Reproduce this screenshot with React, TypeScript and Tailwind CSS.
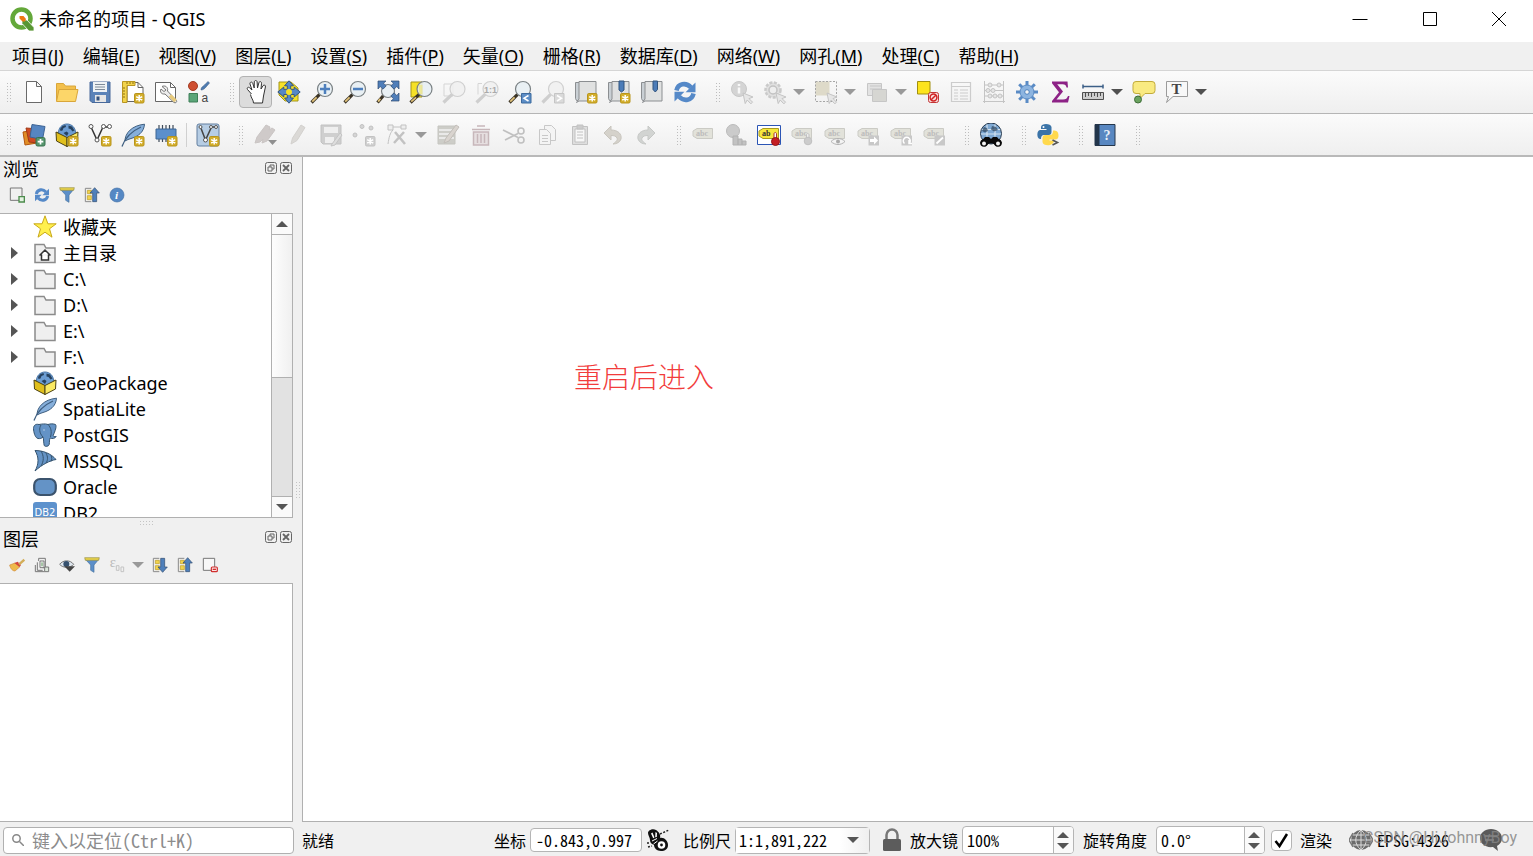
import React, { ReactNode } from "react";

/* ---------- shared drawing helpers ---------- */

function Svg({ children, small }: { children: ReactNode; small?: boolean }) {
  return (
    <svg viewBox="0 0 24 24" className={small ? "size-4 shrink-0" : "size-6 shrink-0"} fill="none" aria-hidden="true">
      {children}
    </svg>
  );
}

function Badge({ off }: { off?: boolean }) {
  return (
    <g>
      <rect x="13.5" y="13.5" width="9.5" height="9.5" rx="1.2" fill={off ? "#cfcfcf" : "#d3ae2b"} stroke={off ? "#c2c2c2" : "#b8941b"} />
      <path d="M18.2 15v6.5M15.2 16.6l6 3.4M21.2 16.6l-6 3.4" stroke="#fff" strokeWidth="1.5" />
    </g>
  );
}

function Lens({ off, cx = 15, cy = 9, r = 7.5, children }: { off?: boolean; cx?: number; cy?: number; r?: number; children?: ReactNode }) {
  return (
    <g>
      <path d={`M${cx - r * 0.72} ${cy + r * 0.72}L1.5 22.5`} stroke={off ? "#cecece" : "#3a3326"} strokeWidth="3.2" />
      {!off && <path d={`M${cx - r * 0.72 - 3} ${cy + r * 0.72 + 3}L2.2 21.6`} stroke="#e2c37a" strokeWidth="1.8" />}
      <circle cx={cx} cy={cy} r={r} fill={off ? "#f0f0f0" : "#e6eef3"} fillOpacity="0.85" stroke={off ? "#d0d0d0" : "#7a8184"} strokeWidth="1.2" />
      {children}
    </g>
  );
}

function Cursor() {
  return <path d="M13 13l10 4-4 1.600 3.600 3.600-1.800 1.600-3.600-3.800-2 3.600z" fill="#e6e6e6" stroke="#c4c4c4" />;
}

function Box({ children }: { children?: ReactNode }) {
  return (
    <g strokeLinejoin="round">
      <path d="M1 9.500L12 5l11 4.500-11 5z" fill="#8a7a2a" />
      <path d="M3.500 11C3 5 7 1 12 1s9 4 8.500 10L12 15z" fill="#6c9dd3" stroke="#4b76a6" />
      <path d="M5 6l2.500-3 3-1 .5 2-2.500 1-1 2.500-2 .5zM13.500 2.500l3.500 1 2.500 4-2 1-2-2.500-2-.5zM8.500 10l3-1.500 2 1.500-1.500 3z" fill="#27425f" />
      <path d="M1 9l11 5.500v9L1.500 18z" fill="#e0bf1c" stroke="#4d4314" />
      <path d="M23 9l-11 5.500v9L22.500 18z" fill="#fbea63" stroke="#4d4314" />
      {children}
    </g>
  );
}

function Feather() {
  return (
    <g>
      <path d="M4 18C4 10 11 2.500 23.500 1.200c-.5 5.500-3 9-7.500 11.800C12 15.500 8 15.500 4 18z" fill="#86afdb" stroke="#3f5f80" />
      <path d="M1 23.500C4 15 11 8 20 4" stroke="#3f5f80" strokeWidth="1.300" />
    </g>
  );
}

function Refresh() {
  return (
    <g>
      <path d="M3.500 10.500C5 3.500 13 2 18 7.500" stroke="#5589c8" strokeWidth="4.600" />
      <path d="M22.500 2.500V12.300H12.500z" fill="#5589c8" />
      <path d="M20.500 13.500C19 20.500 11 22 6 16.500" stroke="#5589c8" strokeWidth="4.600" />
      <path d="M1.500 21.500V11.700H11.500z" fill="#5589c8" />
    </g>
  );
}

function Book() {
  return (
    <g stroke="#8b8e91" strokeLinejoin="round">
      <path d="M1.500 2.500h5v18h-4l-1-2z" fill="#c9cfd4" />
      <path d="M5 1.500h17V21H5l-2.500 1.500L5 19z" fill="#e0e1e1" />
    </g>
  );
}

function Tag({ children, on }: { children?: ReactNode; on?: boolean }) {
  return (
    <g>
      <path d="M6 5.500h15.500v10H6L2 13V8z" fill={on ? "#f7e83c" : "#e2e2da"} stroke={on ? "#a89a20" : "#cbcbc5"} />
      <text x="5" y="13" fontSize="8" fontFamily="Liberation Serif, serif" fontWeight="700" fill={on ? "#333" : "#bcbcbc"}>
        {on ? "ab" : "abc"}
      </text>
      {children}
    </g>
  );
}

function TreeBars({ up }: { up?: boolean }) {
  return (
    <g>
      <path d="M2 2h9M2 2v20h9" stroke="#8a8a8a" strokeWidth="1.500" />
      <path d="M5 5h6v5H5zM5 13h6v6H5z" fill="#f1d34b" stroke="#b99a27" />
      {up ? (
        <path d="M16 1l7 8h-4v13h-6V9H9z" fill="#4f80bb" stroke="#2f4a6c" />
      ) : (
        <path d="M16 23l7-8h-4V2h-6v13H9z" fill="#4f80bb" stroke="#2f4a6c" />
      )}
    </g>
  );
}

function Folder({ home }: { home?: boolean }) {
  return (
    <g>
      <path d="M2 3.500h9l2 3.500h9v14.500H2z" fill="#efefef" stroke="#8b8b8b" strokeWidth="1.500" />
      {home && <path d="M6.500 14.500L12 9l5.500 5.500M8.500 13.500V19h7v-5.500" fill="#fff" stroke="#333" strokeWidth="1.500" />}
    </g>
  );
}

/* ---------- icons by name ---------- */

const icons: Record<string, ReactNode> = {
  newFile: <path d="M4.500 1.500h10l5 5v16h-15zM14.500 1.500v5h5" fill="#fff" stroke="#6a6a6a" />,
  open: (
    <g stroke="#d9a63a" strokeLinejoin="round">
      <path d="M1.500 21V3.500h7l2 2.500h10v4" fill="#f3c04c" />
      <path d="M1.500 21.500L4 9.500h19l-2.500 12z" fill="#fcd669" />
    </g>
  ),
  save: (
    <g>
      <path d="M2 2h20v20.500H4l-2-2z" fill="#5b83b8" stroke="#48699a" />
      <path d="M5 2h14v10H5z" fill="#eef2f5" />
      <path d="M7 4.500h10M7 7h10M7 9.500h10" stroke="#7d8a98" />
      <path d="M7 15h11v7H7z" fill="#e6e6e6" />
      <path d="M8.500 16.500h3v4h-3z" fill="#34537e" />
    </g>
  ),
  layout: (
    <g>
      <path d="M6 2.500h11l5 5v14H6z" fill="#fff" stroke="#666" />
      <path d="M17 2.500v5h5" stroke="#666" />
      <path d="M1.500 1.500H14v4H6v17H1.500z" fill="#f2d34b" stroke="#b99621" />
      <path d="M2 8h2M2 11h2M2 14h2M2 17h2M6 2v2M9 2v2M12 2v2" stroke="#8d7216" />
      <Badge />
    </g>
  ),
  layoutManager: (
    <g>
      <path d="M1.500 2.500h15l5 5v14h-20z" fill="#fff" stroke="#666" />
      <path d="M16.500 2.500v5h5" stroke="#666" />
      <path d="M8 6.500c3-1.500 6.500.5 5.500 4.500l9 9.500c.8 1.500-1 3-2.500 2l-9-8.500c-3.500.5-5.500-2-4-5l3 2.500 2-1.500z" fill="#ededed" stroke="#777" />
      <path d="M16 15.500l5.500 5.500" stroke="#e7ca7b" strokeWidth="3.500" />
    </g>
  ),
  style: (
    <g>
      <circle cx="6" cy="6" r="4.500" fill="#cf4f31" stroke="#a23c24" />
      <path d="M2 13.500h8.500v8.500H2z" fill="#5aa578" stroke="#3e7f58" />
      <path d="M14 10c0-3 2-3.500 3.500-5L21 1.500l1.500 1.500-3.500 4c-1 1.500-3 3-5 3z" fill="#4e7bb0" stroke="#3d5f8a" strokeWidth=".6" />
      <text x="14.500" y="22" fontSize="12" fontFamily="Liberation Sans, sans-serif" fill="#444">a</text>
    </g>
  ),
  pan: (
    <path
      d="M7.500 14L3.500 9.500C2.500 7.500 4.500 6.500 5.800 8L8 10 6 4c-.4-2.200 2.200-2.600 2.800-.6L10.200 8 10.300 2c.1-2 2.700-2 2.800 0l.4 6 1.400-5.300c.6-1.800 2.800-1.200 2.600.6L17 9l2-3.200c1-1.500 3-.6 2.400 1.200L19.500 16l-1 7H9.500c0-3-2.500-5-3-8.500"
      fill="#fff"
      stroke="#333"
      strokeLinejoin="round"
    />
  ),
  panSel: (
    <g>
      <path d="M2 2h12l7 6v13H8L2 15z" fill="#f6e127" stroke="#a3951d" />
      <path
        d="M12 .8l4.500 5h-2.800v3.500h3.500V7L23.200 12l-6 5v-2.500h-3.500V18h2.800L12 23.200 7.500 18h2.800v-3.500H6.800V17L.8 12l6-5v2.300h3.500V5.800H7.500z"
        fill="#5688c7"
        stroke="#2e4f7b"
        strokeWidth=".9"
      />
      <circle cx="12" cy="12" r="3" fill="#f6e127" />
    </g>
  ),
  zoomIn: <Lens><path d="M15 4v10M10 9h10" stroke="#4d7fbd" strokeWidth="2.500" /></Lens>,
  zoomOut: <Lens><path d="M10 9h10" stroke="#4d7fbd" strokeWidth="2.500" /></Lens>,
  zoomFull: (
    <Lens cx={12} cy={11} r={6.500}>
      <path d="M2 1h8L7.500 3.200l2.700 2.700L7 9.200 4.200 6.500 2 9zM23 1h-8l2.500 2.200-2.700 2.700L18 9.200l2.800-2.700L23 9zM23 21v-8l-2.200 2.500L18 12.800l-3.200 3.200 2.700 2.700L15 21z" fill="#4f7eb9" stroke="#2f4c72" strokeWidth=".7" />
    </Lens>
  ),
  zoomSel: <g><path d="M2 2h11v15H2z" fill="#f6e127" stroke="#a3951d" /><Lens cx={15.500}><path d="M9.500 5h4v9h-3z" fill="#f6e127" opacity=".35" /></Lens></g>,
  zoomLayer: <g><path d="M2 4h9v12H2z" stroke="#d5d5d5" /><Lens off cx={15.500} /></g>,
  zoomNative: (
    <Lens off cx={15.500}>
      <path d="M3 3.500h4M3 3.500v11" stroke="#d5d5d5" />
      <text x="9" y="12.500" fontSize="9" fontWeight="700" fontFamily="Liberation Sans, sans-serif" fill="#aaa">1:1</text>
    </Lens>
  ),
  zoomLast: <Lens><path d="M13.500 13.500h9.500v9.500h-9.500z" fill="#5b8dc6" stroke="#3d6a9e" /><path d="M20.500 15.500L16 18.200l4.500 2.800" stroke="#fff" strokeWidth="1.500" /></Lens>,
  zoomNext: <Lens off><path d="M13.500 13.500h9.500v9.500h-9.500z" fill="#dadada" stroke="#c5c5c5" /><path d="M16 15.500l4.500 2.700L16 21" stroke="#fff" strokeWidth="1.500" /></Lens>,
  bookNew: <g><Book /><Badge /></g>,
  bookMarkNew: <g><Book /><path d="M12 1h5v9l-2.500 2L12 10z" fill="#4c7cb8" stroke="#31547e" /><Badge /></g>,
  bookMark: <g><Book /><path d="M13 1h4.500v8.500l-2.200 2.500L13 9.500z" fill="#4c7cb8" stroke="#31547e" /></g>,
  refresh: <Refresh />,
  identify: (
    <g>
      <circle cx="9" cy="9" r="7.500" fill="#d4d4d4" stroke="#c8c8c8" />
      <path d="M9 7.500v6M9 4v2" stroke="#f8f8f8" strokeWidth="2.500" />
      <Cursor />
    </g>
  ),
  action: (
    <g>
      <circle cx="10" cy="10" r="7.500" fill="#e0e0e0" stroke="#cacaca" strokeWidth="2.500" strokeDasharray="3 1.500" />
      <circle cx="10" cy="10" r="4" fill="#eee" stroke="#c2c2c2" strokeWidth="1.500" />
      <Cursor />
    </g>
  ),
  select: (
    <g>
      <path d="M1.500 1.500h14v14h-14z" fill="#dedac9" />
      <path d="M1.500 1.500h21v20h-21z" stroke="#a5a5a5" strokeDasharray="2 1.500" />
      <Cursor />
    </g>
  ),
  form: (
    <g stroke="#c6c6c6">
      <path d="M2.500 3.500h14v12h-14z" fill="#e2e2e2" />
      <path d="M5 6h11M5 9h11" />
      <path d="M7.500 9.500h14v12h-14z" fill="#d6d6d2" />
    </g>
  ),
  deselect: (
    <g>
      <path d="M1.500 1.500h12.500v12.500H1.500z" fill="#fde41d" stroke="#a18f10" />
      <rect x="12.500" y="12.500" width="10" height="10" rx="2" fill="#f6dcdc" stroke="#c33535" />
      <circle cx="17.500" cy="17.500" r="3.400" stroke="#d12424" strokeWidth="1.500" />
      <path d="M15.200 19.800l4.600-4.600" stroke="#d12424" strokeWidth="1.500" />
    </g>
  ),
  table: <path d="M2.500 2.500h19v19h-19zM2.500 6.500h19M5 10h4M11 10h8M5 13h4M11 13h8M5 16h4M11 16h8M5 19h4M11 19h8" stroke="#cccccc" strokeWidth="1.200" />,
  abacus: (
    <g stroke="#c4c4c4">
      <path d="M2.500 1v22M21.500 1v22M1 21.500h22M2 5h20M2 10.500h20M2 16h20" />
      <g fill="#e5e5e5">
        <circle cx="8" cy="5" r="2" /><circle cx="17" cy="5" r="2" /><circle cx="6" cy="10.500" r="2" /><circle cx="11" cy="10.500" r="2" />
        <circle cx="8" cy="16" r="2" /><circle cx="13" cy="16" r="2" /><circle cx="18" cy="16" r="2" />
      </g>
    </g>
  ),
  gear: (
    <g>
      <path d="M12 1v22M1 12h22M4.200 4.200l15.600 15.600M19.800 4.200L4.200 19.800" stroke="#5a8bc5" strokeWidth="3" />
      <circle cx="12" cy="12" r="7" fill="#8cb4e0" stroke="#5a8bc5" />
      <circle cx="12" cy="12" r="2.300" fill="#f5f5f5" stroke="#5083be" />
    </g>
  ),
  sigma: <path d="M4 1.500h15.500l.5 6h-1.500c-.5-2.500-1.500-3.200-4-3.200H9.200l5.800 7.200-6.500 8H15c3 0 4-1 5-3.500h1.500l-1.500 6.500H4V21l7-8.700L4 3.300z" fill="#8d2286" />,
  measure: (
    <g>
      <path d="M2 6.500h20M2 4.500v4M22 4.500v4" stroke="#3c5f87" strokeWidth="1.500" />
      <path d="M1.500 12.500h21v7h-21z" fill="#cdcdcd" stroke="#4f4f4f" />
      <path d="M4.500 13v4M7.500 13v3M10.500 13v4M13.500 13v3M16.500 13v4M19.500 13v3" stroke="#4f4f4f" />
    </g>
  ),
  tip: (
    <g>
      <path d="M4 1.500h16a3 3 0 013 3v6a3 3 0 01-3 3h-7l-5 5v-5H4a3 3 0 01-3-3v-6a3 3 0 013-3z" fill="#f9ea81" stroke="#c2ab3c" />
      <circle cx="6" cy="19.500" r="3.500" fill="#6aa35f" stroke="#3f6d38" />
    </g>
  ),
  annotation: (
    <g>
      <path d="M1.500 1.500h21v15H8l-6.500 6 2-6h-2z" fill="#f8f8f8" stroke="#9b9b9b" />
      <text x="6.500" y="14" fontSize="15" fontWeight="700" fontFamily="Liberation Serif, serif" fill="#444">T</text>
    </g>
  ),
  dataSource: (
    <g>
      <path d="M1 9l12-2 2 13-12 2z" fill="#e08d26" stroke="#b4560e" />
      <path d="M4 5l13 1-1 14-9-1z" fill="#cf4a22" stroke="#a13a18" />
      <path d="M10 1.500l13 2-2.500 13L8 14z" fill="#5686c2" stroke="#3d6495" />
      <rect x="14" y="14.500" width="9" height="8.500" rx="1.500" fill="#57966e" stroke="#39724f" />
      <path d="M18.500 16v5.500M15.700 18.700h5.600" stroke="#fff" strokeWidth="1.700" />
    </g>
  ),
  geopackageNew: <g><Box /><Badge /></g>,
  shapeNew: (
    <g>
      <path d="M3 4l6 13 6-13h5" stroke="#333" strokeWidth="1.500" />
      <g fill="#fff" stroke="#555"><circle cx="3" cy="3.500" r="2" /><circle cx="9" cy="17" r="2" /><circle cx="15.500" cy="3.500" r="2" /><circle cx="21.500" cy="3.500" r="2" /></g>
      <Badge />
    </g>
  ),
  spatialiteNew: <g><Feather /><Badge /></g>,
  memoryNew: (
    <g>
      <path d="M5 2v17M8.500 2v17M12 2v17M15.500 2v17M19 2v17" stroke="#3f4b59" strokeWidth="1.200" />
      <path d="M2 6h20v10H2z" fill="#5b8fcb" stroke="#3e6794" />
      <Badge />
    </g>
  ),
  virtualNew: (
    <g>
      <rect x="1" y="1" width="22" height="22" rx="2" fill="#b6cde4" stroke="#627f9f" />
      <path d="M4.500 4l5 13 6-13h5" stroke="#444" strokeWidth="1.500" />
      <g fill="#fff" stroke="#555"><circle cx="4.500" cy="4" r="1.500" /><circle cx="9.500" cy="17" r="2" /><circle cx="15" cy="4" r="1.500" /><circle cx="20" cy="4" r="1.500" /></g>
      <Badge />
    </g>
  ),
  edits: (
    <g>
      <path d="M2 20L4 14 13 2l4 2-1 3 3-2 3 2-8 11-5 2 1-4-3 3z" fill="#cfcac9" stroke="#cac5c4" />
      <path d="M15 17h9l-4.500 5z" fill="#8f8f8f" />
    </g>
  ),
  pencil: <path d="M5 21l1.500-6L15 2l4 2.500-8 13z" fill="#dbd9d6" stroke="#d3d1ce" />,
  saveEdits: (
    <g>
      <path d="M2 2h20v19H4l-2-2z" fill="#cfcfcf" stroke="#c2c2c2" />
      <path d="M5 4h14v6H5zM6 14h9v6H6z" fill="#efefef" />
      <path d="M13 21l8-11 2 2-7 10-4 1z" fill="#ddd" stroke="#c4c4c4" />
    </g>
  ),
  addPoint: (
    <g>
      <g fill="#d5d5d5" stroke="#c2c2c2"><circle cx="3" cy="12" r="2" /><circle cx="10" cy="3.500" r="2" /><circle cx="19" cy="5" r="2" /></g>
      <Badge off />
    </g>
  ),
  vertex: (
    <g stroke="#c2c2c2">
      <path d="M3 21c1-7 2-11 5-14M5 4h16" />
      <path d="M3 2h5v5H3zM16 2h5v4h-5z" fill="#eee" />
      <path d="M9 20L19 9M10 9l10 12" strokeWidth="2.500" />
    </g>
  ),
  modify: (
    <g>
      <path d="M2 3h17v18H2z" fill="#cdcdc8" stroke="#c5c5c0" />
      <path d="M3 7h15M3 11h15M3 15h15" stroke="#f2f2f2" strokeWidth="1.300" />
      <path d="M8 20l2-5L20 2l3 2-10 14z" fill="#d9d4cf" stroke="#c2beb9" />
    </g>
  ),
  trash: <g stroke="#c7b7ba" strokeWidth="1.500"><path d="M3 6.500h18M8 3h8M4.500 9h15v13h-15z" fill="#e6dfe0" /><path d="M8.500 11v9M12 11v9M15.500 11v9" /></g>,
  cut: (
    <g stroke="#c0c0c0" strokeWidth="1.600">
      <path d="M1 7l15 7.500M3 17l13-6.500" />
      <circle cx="19" cy="8" r="3" />
      <circle cx="19" cy="17" r="3" />
    </g>
  ),
  copy: <g stroke="#c8c8c8" fill="#f4f4f4"><path d="M9.500 2.500h7l4 4v11h-11z" /><path d="M4.500 6.500h7l4 4v11h-11zM7 12.500h6M7 15.500h6M7 18.500h6" /></g>,
  paste: <g stroke="#c2c2c2"><path d="M4.500 3.500h15v18h-15z" fill="#dedede" /><path d="M7 6h10v13H7z" fill="#f7f7f7" /><path d="M9 9h6M9 12h6M9 15h6" /><path d="M9 2h6v4H9z" fill="#ccc" /></g>,
  undo: <path d="M10 3v4c7 0 11 4 10 9-1 3-4 5-8 5 3-2 5-4 4-6s-3-2.500-6-2.500V17L3 10z" fill="#d5d2cb" stroke="#c8c5be" />,
  redo: <path d="M14 3v4C7 7 3 11 4 16c1 3 4 5 8 5-3-2-5-4-4-6s3-2.500 6-2.500V17l7-7z" fill="#d2d4d2" stroke="#c6c8c6" />,
  label: <Tag />,
  diagram: <g><circle cx="9" cy="8" r="6.500" fill="#cbcbcb" stroke="#bbb" /><path d="M9 13h5v9H9zM14 16h4v6h-4zM18 18h4v4h-4z" fill="#c2c2c2" stroke="#b2b2b2" /></g>,
  labelHi: (
    <g>
      <path d="M.5 2.500h23v19H.5z" fill="#fff" stroke="#2b55b5" />
      <Tag on />
      <path d="M17 16v-5c0-2 2.500-2 2.500 0v6" fill="#fff" stroke="#a33" />
      <circle cx="18.500" cy="18.500" r="4" fill="#c51e23" stroke="#8d1417" />
    </g>
  ),
  labelPin: <Tag><path d="M16.500 16v-4c0-2 2.500-2 2.500 0v4" fill="#eee" stroke="#c2c2c2" /><circle cx="18" cy="18" r="3.800" fill="#ccc" stroke="#c0c0c0" /></Tag>,
  labelEye: <Tag><path d="M8 18.500c4-4 10-4 14 0-4 4-10 4-14 0z" fill="#f4f4f4" stroke="#b2b2b2" /><circle cx="15" cy="18.500" r="2" fill="#aaa" /></Tag>,
  labelMove: <Tag><path d="M12.500 12.500H23v10H12.500z" fill="#c8c8c8" /><path d="M14 16h4v-2.500l4 4-4 4V19h-4z" fill="#fff" /></Tag>,
  labelRotate: <Tag><path d="M12.500 12.500H23v10H12.500z" fill="#c8c8c8" /><path d="M15.500 20.500a3.500 3.500 0 114.500 0M20 17v3.500h3" stroke="#fff" strokeWidth="1.500" /></Tag>,
  labelEdit: <Tag><path d="M12.500 12.500H23v10H12.500z" fill="#c8c8c8" /><path d="M14.500 20.500l6.500-6" stroke="#fff" strokeWidth="1.800" /></Tag>,
  metasearch: (
    <g>
      <circle cx="12" cy="10.500" r="10.500" fill="#7fa9d3" stroke="#26384d" />
      <path d="M3 6.500h18M2 11h20M8 1.500v12M16 1.500v12" stroke="#d4e3f0" strokeWidth="1.200" />
      <path d="M5 4l3 1 1 3-3 1.500-3-1.500zM13 3l4 1 2 3-4 1.500-3-2z" fill="#2b4159" opacity=".7" />
      <path d="M1 20l5-6h4l2 2 2-2h4l5 6-5 3.500-4-3h-4l-4 3z" fill="#090909" />
      <circle cx="5" cy="20" r="3.800" fill="#090909" /><circle cx="19" cy="20" r="3.800" fill="#090909" />
      <circle cx="5" cy="20.500" r="2" fill="#f3f3f3" /><circle cx="19" cy="20.500" r="2" fill="#f3f3f3" />
    </g>
  ),
  python: (
    <g>
      <path d="M5 4c0-4 10-4 10.500 0v5c0 2-1 3-3 3H8c-2 0-3 1.500-3 4H4C.5 16 .5 7 4 7h6.500V6H5z" fill="#3b74a8" />
      <path d="M17 7.500c4 0 5 1 5.500 4.500.2 3-1 4.500-3.500 4.500h-5.500v1H18c0 6-11 6-11.500 1.500V15c0-2 1-3 3-3h4.500c2 0 3-1.500 3-4.500z" fill="#ffd94d" />
      <circle cx="7.500" cy="4" r="1" fill="#fff" />
      <path d="M16.500 17l5 2.500-5 2.500" stroke="#555" strokeWidth="1.600" />
    </g>
  ),
  help: (
    <g>
      <path d="M2 1.500h20v21H2z" fill="#5887c1" stroke="#26374b" />
      <path d="M2 1.500h4.500v21H2z" fill="#22354b" />
      <text x="10.500" y="17" fontSize="14" fontWeight="700" fontFamily="Liberation Serif, serif" fill="#e8f0f8">?</text>
    </g>
  ),
  addLayer: <g><path d="M2 1.500h17.500V20H2z" stroke="#777" strokeWidth="1.500" /><path d="M15 14.500h8v8h-8z" fill="#e4f2e2" stroke="#4c8c4c" strokeWidth="2" /></g>,
  filter: (
    <g>
      <path d="M1.500 3h21l-7.500 9v11l-5-3v-8z" fill="#5c8fc9" stroke="#44719f" />
      <path d="M1 1h22l-1 4H2z" fill="#e5d04a" stroke="#9c9146" />
    </g>
  ),
  collapse: <TreeBars up />,
  expand: <TreeBars />,
  info: <g><circle cx="12" cy="12" r="10.500" fill="#5588c4" stroke="#4270a6" /><text x="9" y="18" fontSize="17" fontStyle="italic" fontWeight="700" fontFamily="Liberation Serif, serif" fill="#fff">i</text></g>,
  brush: <g><path d="M1 12l8-3 7 6-7 6c-4 0-7-4-8-9z" fill="#eeb94a" stroke="#cf8b3d" /><path d="M8 9l5-2 5 5-2 3z" fill="#d4453a" /><path d="M15 11l8-7" stroke="#d3ad58" strokeWidth="3.500" /></g>,
  group: <g stroke="#777" strokeWidth="1.500"><path d="M7 6V2h10v14h-4M5 8v12h8M2 12v10h14" /><path d="M9 6h6v10H9z" fill="#fff" /><path d="M12 8v6" stroke="#4c8c4c" /><path d="M16 15h6v7h-6z" fill="#dde8dd" /></g>,
  eye: <g><path d="M1 11c5-7 16-7 21 0-5 6-16 6-21 0z" fill="#dfe7ef" stroke="#777" strokeWidth="1.500" /><circle cx="11" cy="10.500" r="4.500" fill="#35506e" /><path d="M8 14h16l-8 8z" fill="#444" /></g>,
  expr: <g><text x="1" y="15" fontSize="22" fontFamily="Liberation Serif, serif" fill="#b9b9b9">ε</text><path d="M11 13h4v7h-4zM18 15h4v7h-4z" stroke="#c3c3c3" strokeWidth="1.500" /></g>,
  removeLayer: <g><path d="M2 2h17v18H2z" stroke="#777" strokeWidth="1.500" fill="#f7f7f7" /><rect x="14" y="15" width="9" height="7" rx="1.500" fill="#fbe4e4" stroke="#d13030" strokeWidth="1.800" /><path d="M16 18.500h5" stroke="#d13030" strokeWidth="2" /></g>,
  star: <path d="M12 .8l2.900 8h8.300l-6.700 5 2.500 8.400-7-5-7 5 2.500-8.400-6.700-5h8.300z" fill="#fff04d" stroke="#c9a91a" strokeLinejoin="round" />,
  home: <Folder home />,
  folder: <Folder />,
  geopackage: <Box />,
  spatialite: <Feather />,
  postgis: (
    <g stroke="#34536f" strokeLinejoin="round">
      <path d="M6 1.500C2 .5 0 3 .6 7c.5 4 2 8 4.400 8.500 2 .3 3.500 0 5-1.500.8 2 .5 6 1.200 8.500 1 1.500 4.500 1 5-1 .4-2.500 0-5 1-6.500 2 1 5 .5 6-1.500-1.500.3-3 0-3-1C22 8 24 3.500 22.500 1.500 20 .5 17 .8 15 1.500c-3-1-6-.5-9 0z" fill="#6493c6" />
      <path d="M8 2c-2 3-2 8 2 12M15 1.500c3 3 4 7 2.500 12.500" />
      <path d="M10.500 7h1" stroke="#fff" strokeWidth="1.200" />
    </g>
  ),
  mssql: <g stroke="#34536f"><path d="M2 1.500c8 0 16 3 21 9-6 1-14 5-21 11.500C6 15 6 8 2 1.500z" fill="#6493c6" /><path d="M8 2c3 5 3 10 0 15M13 4c2 4 2 7 0 10M18 6.500c1 2 1 4 0 6" /></g>,
  oracle: <rect x="1.200" y="4" width="21.600" height="16" rx="6" fill="#6493c6" stroke="#3b536d" strokeWidth="2.200" />,
  db2: <g><rect x="0" y="1" width="24" height="22" rx="3" fill="#5d92cd" /><text x="1.500" y="15" fontSize="10" fontFamily="DejaVu Sans, sans-serif" fill="#fff">DB2</text></g>,
};

/* ---------- toolbars ---------- */

function Grip() {
  return <span className="h-5 w-[5px] shrink-0 bg-[radial-gradient(#bdbdbd_1px,transparent_1px)] bg-[size:3px_3px]" />;
}

function Caret({ off }: { off?: boolean }) {
  return (
    <svg viewBox="0 0 12 6" className="h-[6px] w-3" aria-hidden="true">
      <path d="M0 0h12L6 6z" fill={off ? "#999" : "#505050"} />
    </svg>
  );
}

type Tool = string | { gap: true } | { sep: true } | { menu: string; off?: boolean };

function ToolItem({ item, active }: { item: Tool; active?: boolean }) {
  if (typeof item === "string") {
    return (
      <button
        type="button"
        aria-label={item}
        className={
          active
            ? "flex h-8 w-[33px] shrink-0 items-center justify-center rounded-sm border border-[#b2b2b2] bg-[#dcdcdc]"
            : "flex h-8 w-[33px] shrink-0 items-center justify-center"
        }
      >
        <Svg>{icons[item]}</Svg>
      </button>
    );
  }
  if ("gap" in item) return <span className="flex w-6 shrink-0 justify-center pl-2"><Grip /></span>;
  if ("sep" in item) return <span className="mx-1 h-6 w-px shrink-0 bg-[#d0d0d0]" />;
  return (
    <button type="button" aria-label={item.menu} className="flex h-8 w-[18px] shrink-0 items-center justify-center pr-[2px]">
      <Caret off={item.off} />
    </button>
  );
}

const gap: Tool = { gap: true };

const mainTools: Tool[] = [
  "newFile", "open", "save", "layout", "layoutManager", "style", gap,
  "pan", "panSel", "zoomIn", "zoomOut", "zoomFull", "zoomSel", "zoomLayer", "zoomNative", "zoomLast", "zoomNext", "bookNew", "bookMarkNew", "bookMark", "refresh", gap,
  "identify", "action", { menu: "action options", off: true }, "select", { menu: "select options", off: true }, "form", { menu: "form options", off: true },
  "deselect", "table", "abacus", "gear", "sigma", "measure", { menu: "measure options" }, "tip", "annotation", { menu: "annotation options" },
];

const dataTools: Tool[] = [
  "dataSource", "geopackageNew", "shapeNew", "spatialiteNew", "memoryNew", { sep: true }, "virtualNew", gap,
  "edits", "pencil", "saveEdits", "addPoint", "vertex", { menu: "vertex options", off: true }, "modify", "trash", "cut", "copy", "paste", "undo", "redo", gap,
  "label", "diagram", "labelHi", "labelPin", "labelEye", "labelMove", "labelRotate", "labelEdit", gap,
  "metasearch", gap, "python", gap, "help", gap,
];

function Toolbar({ items, last }: { items: Tool[]; last?: boolean }) {
  return (
    <div
      role="toolbar"
      className={
        last
          ? "flex h-[43px] shrink-0 items-center overflow-hidden border-b-2 border-[#b9b9b9] bg-linear-to-b from-[#fbfbfb] to-[#efefef]"
          : "flex h-[43px] shrink-0 items-center overflow-hidden border-b border-[#b5b5b5] bg-linear-to-b from-[#fbfbfb] to-[#efefef]"
      }
    >
      <span className="flex w-[17px] shrink-0 justify-center"><Grip /></span>
      {items.map((item, i) => <ToolItem key={i} item={item} active={item === "pan"} />)}
    </div>
  );
}

/* ---------- title and menu ---------- */

const menus: [string, string][] = [
  ["项目", "J"], ["编辑", "E"], ["视图", "V"], ["图层", "L"], ["设置", "S"], ["插件", "P"], ["矢量", "O"],
  ["栅格", "R"], ["数据库", "D"], ["网络", "W"], ["网孔", "M"], ["处理", "C"], ["帮助", "H"],
];

function TitleBar() {
  return (
    <header className="flex h-[42px] shrink-0 items-center bg-white pb-1 pl-[10px]">
      <Svg>
        <circle cx="11.500" cy="11.500" r="9" stroke="#64a83a" strokeWidth="4.500" />
        <path d="M12 13h5l7 7.500V24h-5l-7-7.500z" fill="#589632" stroke="#fff" strokeWidth=".8" />
        <path d="M9.500 9h4l2.500 3-1 2.500h-2.500l-3-3z" fill="#ee7913" />
      </Svg>
      <h1 className="ml-[5px] flex-1">未命名的项目 - QGIS</h1>
      <button type="button" aria-label="最小化" className="flex h-full w-[70px] items-center justify-center">
        <svg viewBox="0 0 16 16" className="size-4"><path d="M.5 8.500h15" stroke="#000" /></svg>
      </button>
      <button type="button" aria-label="最大化" className="flex h-full w-[70px] items-center justify-center">
        <svg viewBox="0 0 16 16" className="size-4" fill="none"><path d="M1.500 1.500h13v13h-13z" stroke="#000" /></svg>
      </button>
      <button type="button" aria-label="关闭" className="flex h-full w-[68px] items-center justify-center">
        <svg viewBox="0 0 16 16" className="size-4"><path d="M1 1l14 14M15 1L1 15" stroke="#000" /></svg>
      </button>
    </header>
  );
}

/* ---------- docks ---------- */

function DockTitle({ title }: { title: string }) {
  return (
    <div className="flex h-6 shrink-0 items-center gap-[3px] pr-px pl-[3px]">
      <h2 className="flex-1">{title}</h2>
      <button type="button" aria-label="浮动" className="mb-[3px]">
        <svg viewBox="0 0 12 12" className="size-3" fill="none" stroke="#666"><rect x=".5" y=".5" width="11" height="11" rx="2" /><path d="M5 5V3h4v4H7M3 5h4v4H3z" /></svg>
      </button>
      <button type="button" aria-label="关闭面板" className="mb-[3px]">
        <svg viewBox="0 0 12 12" className="size-3" fill="none" stroke="#666"><rect x=".5" y=".5" width="11" height="11" rx="2" /><path d="M3 3l6 6M9 3L3 9" strokeWidth="1.800" /></svg>
      </button>
    </div>
  );
}

function DockTools({ names }: { names: string[] }) {
  return (
    <div role="toolbar" className="flex h-8 shrink-0 items-center pb-1 pl-1">
      {names.map((n) =>
        n === "caret" ? (
          <button key={n} type="button" aria-label="expression options" className="flex h-6 w-[18px] items-center justify-center"><Caret off /></button>
        ) : (
          <button key={n} type="button" aria-label={n} className="flex h-6 w-[25px] items-center justify-center"><Svg small>{icons[n]}</Svg></button>
        )
      )}
    </div>
  );
}

const tree: [string, string, boolean][] = [
  ["star", "收藏夹", false], ["home", "主目录", true], ["folder", "C:\\", true], ["folder", "D:\\", true], ["folder", "E:\\", true], ["folder", "F:\\", true],
  ["geopackage", "GeoPackage", false], ["spatialite", "SpatiaLite", false], ["postgis", "PostGIS", false], ["mssql", "MSSQL", false], ["oracle", "Oracle", false], ["db2", "DB2", false],
];

function Tri({ down }: { down?: boolean }) {
  return <svg viewBox="0 0 12 6" className="h-[6px] w-3" aria-hidden="true"><path d={down ? "M0 0h12L6 6z" : "M0 6h12L6 0z"} fill="#555" /></svg>;
}

function Docks() {
  return (
    <aside className="flex min-h-0 w-[293px] shrink-0 flex-col">
      <DockTitle title="浏览" />
      <DockTools names={["addLayer", "refresh", "filter", "collapse", "info"]} />
      <div className="flex min-h-0 flex-[305] border-y border-r border-[#b0b0b0] bg-white">
        <ul className="min-w-0 flex-1 overflow-hidden">
          {tree.map(([icon, name, open]) => (
            <li key={name} className="flex h-[26px] items-center pl-[11px]">
              <span className="flex w-[22px]">
                {open && <svg viewBox="0 0 7 12" className="h-3 w-[7px]"><path d="M0 0l7 6-7 6z" fill="#555" /></svg>}
              </span>
              <Svg>{icons[icon]}</Svg>
              <span className="ml-[6px]">{name}</span>
            </li>
          ))}
        </ul>
        <div className="flex w-[21px] shrink-0 flex-col border-l border-[#b0b0b0] bg-[#e2e2e2]">
          <button type="button" aria-label="向上滚动" className="flex h-[21px] shrink-0 items-center justify-center border-b border-[#b0b0b0] bg-[#fafafa]"><Tri /></button>
          <div className="flex-[143] border-b border-[#b0b0b0] bg-linear-to-r from-[#fdfdfd] to-[#f0f0f0]" />
          <div className="flex-[118]" />
          <button type="button" aria-label="向下滚动" className="flex h-[21px] shrink-0 items-center justify-center border-t border-[#b0b0b0] bg-[#fafafa]"><Tri down /></button>
        </div>
      </div>
      <div className="flex h-[9px] shrink-0 items-center justify-center">
        <span className="h-[5px] w-[15px] bg-[radial-gradient(#c4c4c4_1px,transparent_1px)] bg-[size:3px_3px]" />
      </div>
      <DockTitle title="图层" />
      <DockTools names={["brush", "group", "eye", "filter", "expr", "caret", "expand", "collapse", "removeLayer"]} />
      <div className="min-h-0 flex-[239] border-y border-r border-[#b0b0b0] bg-white" />
    </aside>
  );
}

/* ---------- status bar ---------- */

function Spin({ id, value, className }: { id: string; value: string; className: string }) {
  return (
    <span className={className}>
      <input id={id} defaultValue={value} className="w-0 min-w-0 flex-1 px-1 outline-none" />
      <span className="flex w-5 flex-col items-center justify-center gap-[5px] border-l border-[#b5b5b5] bg-[#fafafa]">
        <button type="button" aria-label="增加" className="flex"><Tri /></button>
        <button type="button" aria-label="减少" className="flex"><Tri down /></button>
      </span>
    </span>
  );
}

function StatusBar() {
  return (
    <footer className="relative flex h-[34px] shrink-0 items-center overflow-hidden pt-[2px] pr-[30px] pl-[3px] font-['Noto_Sans_Mono_CJK_SC','Liberation_Mono','Noto_Sans_CJK_SC',monospace] text-base font-[350] whitespace-nowrap">
      <label className="flex h-[27px] w-[291px] shrink-0 items-center gap-2 rounded-sm border border-[#b0b0b0] bg-white pl-2">
        <svg viewBox="0 0 12 12" className="size-3" fill="none" stroke="#888" strokeWidth="1.500"><circle cx="4.500" cy="4.500" r="3.700" /><path d="M7.500 7.500L12 12" /></svg>
        <input aria-label="定位" placeholder="键入以定位(Ctrl+K)" className="min-w-0 flex-1 text-lg outline-none placeholder:text-[#8c8c8c]" />
      </label>
      <span className="ml-2 flex-1">就绪</span>
      <label htmlFor="coord">坐标</label>
      <input id="coord" defaultValue="-0.843,0.997" className="ml-1 h-6 w-[112px] rounded-sm border border-[#b5b5b5] bg-white px-[5px]" />
      <button type="button" aria-label="切换范围显示" className="ml-1">
        <Svg>
          <path d="M2 5c0-3 5-5 8-3s5 5 4 8c4-1 8 3 8 7s-3 6-7 6-7-3-7-6c-3-1-4-3-4-5s-2-5-2-7z" fill="#111" />
          <path d="M5 5.500l1.500-1 2 5-1.300.8zM9.500 4l1.500 1-.2 4-1.600.3z" fill="#fff" />
          <path d="M6 13l5-2.500M7.500 16l4-3" stroke="#fff" />
          <circle cx="15.500" cy="17" r="3.800" fill="#fff" />
          <circle cx="15.500" cy="17" r="1.400" fill="#111" />
          <path d="M14 6l9-4M1 15h3M2 19l4-1" stroke="#222" strokeDasharray="2 1.500" strokeWidth="1.500" />
        </Svg>
      </button>
      <label htmlFor="scale" className="ml-[13px]">比例尺</label>
      <span className="relative ml-1 flex h-[27px] w-[135px] items-center rounded-sm border border-[#b5b5b5] bg-white">
        <select id="scale" className="h-full w-full appearance-none bg-linear-to-r from-white from-78% to-[#efefef] pl-[3px] outline-none">
          <option>1:1,891,222</option>
        </select>
        <span className="pointer-events-none absolute right-[10px] flex"><Tri down /></span>
      </span>
      <button type="button" aria-label="锁定比例" className="ml-[10px]">
        <Svg>
          <path d="M6.500 12V7a5.500 5.500 0 0111 0v5" stroke="#777" strokeWidth="2.500" />
          <rect x="3" y="11" width="18" height="12" rx="1.500" fill="#5c5c5c" />
        </Svg>
      </button>
      <label htmlFor="magnifier" className="ml-[6px]">放大镜</label>
      <Spin id="magnifier" value="100%" className="ml-1 flex h-7 w-[112px] overflow-hidden rounded-sm border border-[#b5b5b5] bg-white" />
      <label htmlFor="rotation" className="ml-[9px]">旋转角度</label>
      <Spin id="rotation" value="0.0°" className="ml-[9px] flex h-7 w-[109px] overflow-hidden rounded-sm border border-[#b5b5b5] bg-white" />
      <label className="ml-[6px] flex items-center gap-2">
        <span className="relative flex size-[21px]">
          <input type="checkbox" defaultChecked className="size-[21px] appearance-none rounded-sm border border-[#b5b5b5] bg-white" />
          <svg viewBox="0 0 21 21" className="pointer-events-none absolute inset-0" fill="none"><path d="M4.500 11l4 5 7.500-12" stroke="#000" strokeWidth="2.500" /></svg>
        </span>
        渲染
      </label>
      <button type="button" className="ml-[17px] flex items-center gap-1">
        <Svg>
          <path d="M4 5l-4 7 4 7M20 5l4 7-4 7" stroke="#777" strokeWidth="1.500" />
          <circle cx="12" cy="12" r="10" fill="#6c6c6c" />
          <path d="M1 12h22M12 2v20M4 7h16M4 17h16M12 2c-7 6-7 14 0 20M12 2c7 6 7 14 0 20" stroke="#dcdcdc" />
        </Svg>
        EPSG:4326
      </button>
      <button type="button" aria-label="消息" className="ml-[30px]">
        <Svg>
          <path d="M12 1c6 0 11 4 11 9 0 4-2 6-5 8l1 5-5-4C6 20 1 15 1 10S6 1 12 1z" fill="#5a5a5a" />
          <path d="M6 8h12M6 12h9" stroke="#888" strokeWidth="1.500" />
        </Svg>
      </button>
      <span className="pointer-events-none absolute right-4 bottom-[6px] font-['Roboto',sans-serif] text-base font-normal text-[#858585]/85">CSDN @HiJohnnyBoy</span>
    </footer>
  );
}

/* ---------- page ---------- */

export default function App() {
  return (
    <div className="flex h-screen flex-col overflow-hidden bg-[#f0f0f0] font-['Noto_Sans','Noto_Sans_CJK_SC',sans-serif] text-lg leading-6 text-black">
      <TitleBar />
      <nav className="flex h-[29px] shrink-0 items-center gap-[19px] border-b border-[#d5d5d5] pl-3">
        {menus.map(([name, key]) => (
          <button key={name} type="button" className="whitespace-nowrap">
            {name}(<u className="underline-offset-2">{key}</u>)
          </button>
        ))}
      </nav>
      <Toolbar items={mainTools} />
      <Toolbar items={dataTools} last />
      <div className="flex min-h-0 flex-1">
        <Docks />
        <div className="flex w-[9px] shrink-0 items-center justify-center">
          <span className="h-[18px] w-[5px] bg-[radial-gradient(#c4c4c4_1px,transparent_1px)] bg-[size:3px_3px]" />
        </div>
        <main className="min-w-0 flex-1 border-b border-l border-[#b0b0b0] bg-white pt-[199px] pl-[271px]">
          <p className="font-['Noto_Sans_CJK_SC',sans-serif] text-[28px] leading-10 font-light text-[#f23c3c]">重启后进入</p>
        </main>
      </div>
      <StatusBar />
    </div>
  );
}
